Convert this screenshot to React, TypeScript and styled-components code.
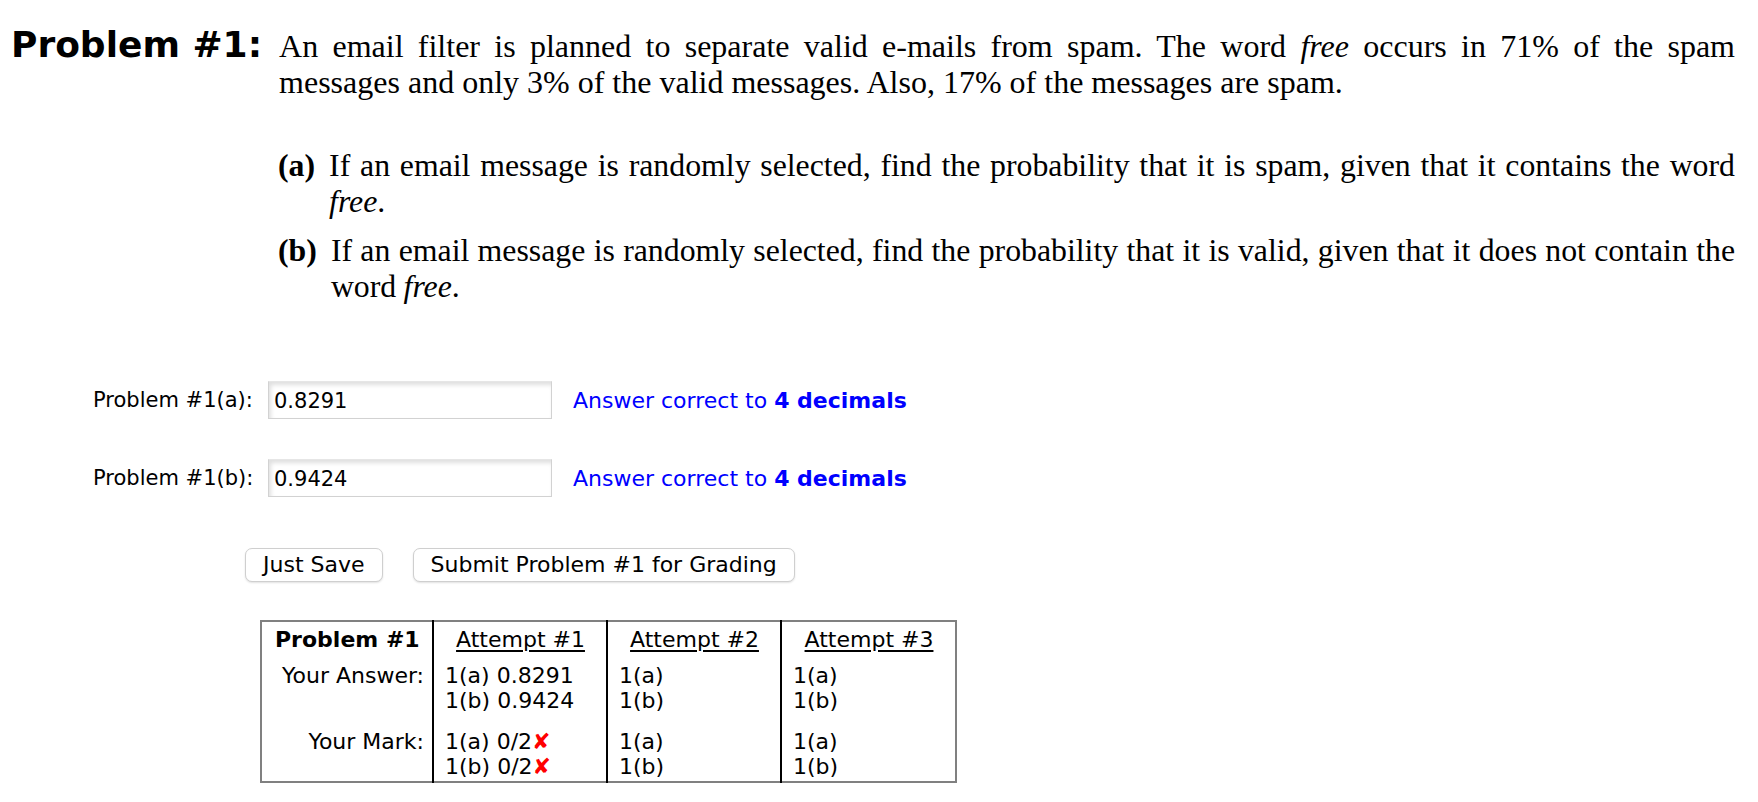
import * as React from 'react';
import styled, { createGlobalStyle } from 'styled-components';

const GlobalStyle = createGlobalStyle`
  html, body {
    margin: 0;
    padding: 0;
    background: #ffffff;
    color: #000000;
  }
`;

const Page = styled.div`
  padding: 28px 23px 20px 11px;
`;

const ProblemHead = styled.div`
  display: flex;
  align-items: baseline;
`;

const ProblemTitle = styled.h1`
  flex: none;
  margin: 0 17px 0 0;
  font-family: "DejaVu Sans", Verdana, sans-serif;
  font-weight: bold;
  font-size: 36px;
  line-height: 32px;
  white-space: nowrap;
`;

const Statement = styled.p`
  flex: 1;
  margin: 0;
  font-family: "Liberation Serif", "Times New Roman", serif;
  font-size: 32px;
  line-height: 36px;
  text-align: justify;
`;

const Parts = styled.div`
  margin: 48px 0 0 267px;
  display: flex;
  flex-direction: column;
  gap: 13px;
`;

const Part = styled.div`
  display: flex;
  font-family: "Liberation Serif", "Times New Roman", serif;
  font-size: 31.8px;
  line-height: 36px;
`;

const PartLabel = styled.b`
  flex: none;
  margin-right: 14px;
`;

const PartText = styled.div`
  flex: 1;
  text-align: justify;
  word-spacing: -0.6px;
`;

const Answers = styled.div`
  margin-top: 76px;
  display: flex;
  flex-direction: column;
  gap: 40px;
  font-family: "DejaVu Sans", Verdana, sans-serif;
  font-size: 21px;
`;

const AnswerRow = styled.div`
  display: flex;
  align-items: center;
  padding-left: 82px;
`;

const AnswerLabel = styled.label`
  width: 175px;
  flex: none;
`;

const AnswerInput = styled.input`
  box-sizing: border-box;
  width: 284px;
  height: 38px;
  padding: 2px 5px 0;
  border: 1px solid #d2d2d2;
  border-top-color: #e6e6e6;
  box-shadow: inset 2px 3px 4px rgba(0, 0, 0, 0.13);
  font-family: "DejaVu Sans", Verdana, sans-serif;
  font-size: 21px;
  color: #000;
  background: #fff;
  outline: none;
`;

const Feedback = styled.span`
  margin-left: 21px;
  color: #0000ff;
  font-size: 22px;

  b {
    font-weight: bold;
  }
`;

const Buttons = styled.div`
  margin: 51px 0 0 234px;
  display: flex;
  gap: 30px;
`;

const Button = styled.button`
  height: 34px;
  padding: 0 17px;
  border: 1px solid #cfcfcf;
  border-radius: 7px;
  background: #ffffff;
  box-shadow: 0 1px 2px rgba(0, 0, 0, 0.12);
  font-family: "DejaVu Sans", Verdana, sans-serif;
  font-size: 22px;
  color: #000;
  line-height: 1;
`;

const Attempts = styled.table`
  margin: 38px 0 0 249px;
  border-collapse: collapse;
  border: 2px solid #808080;
  font-family: "DejaVu Sans", Verdana, sans-serif;
  font-size: 22px;
  line-height: 25px;

  td, th {
    padding: 5px 10px 6px 11px;
    vertical-align: top;
    text-align: left;
    border-left: 2px solid #000;
  }

  td:first-child, th:first-child {
    border-left: none;
  }

  tr:last-child td {
    padding-top: 10px;
    padding-bottom: 2px;
  }
`;

const Corner = styled.th`
  width: 147px;
  font-weight: bold;
  && {
    text-align: left;
    padding-left: 13px;
  }
`;

const AttemptHead = styled.th<{ $width: number }>`
  width: ${(p) => p.$width}px;
  font-weight: normal;
  text-decoration: underline;
  text-underline-offset: 3px;
  && {
    text-align: center;
  }
`;

const RowLabel = styled.td`
  && {
    text-align: right;
    padding-right: 8px;
  }
`;

const Cross = styled.span`
  color: #ff0000;
  font-weight: bold;
`;

const attempts = [
  { name: 'Attempt #1', width: 151, answers: ['0.8291', '0.9424'], marks: ['0/2', '0/2'] },
  { name: 'Attempt #2', width: 151, answers: ['', ''], marks: ['', ''] },
  { name: 'Attempt #3', width: 152, answers: ['', ''], marks: ['', ''] },
];

const parts = ['a', 'b'];

export default function App() {
  return (
    <Page>
      <GlobalStyle />
      <ProblemHead>
        <ProblemTitle>Problem #1:</ProblemTitle>
        <Statement>
          An email filter is planned to separate valid e-mails from spam. The word <i>free</i> occurs
          in 71% of the spam messages and only 3% of the valid messages. Also, 17% of the messages
          are spam.
        </Statement>
      </ProblemHead>

      <Parts>
        <Part>
          <PartLabel>(a)</PartLabel>
          <PartText>
            If an email message is randomly selected, find the probability that it is spam, given
            that it contains the word <i>free</i>.
          </PartText>
        </Part>
        <Part>
          <PartLabel>(b)</PartLabel>
          <PartText>
            If an email message is randomly selected, find the probability that it is valid, given
            that it does not contain the word <i>free</i>.
          </PartText>
        </Part>
      </Parts>

      <Answers>
        <AnswerRow>
          <AnswerLabel>Problem #1(a):</AnswerLabel>
          <AnswerInput defaultValue="0.8291" />
          <Feedback>
            Answer correct to <b>4 decimals</b>
          </Feedback>
        </AnswerRow>
        <AnswerRow>
          <AnswerLabel>Problem #1(b):</AnswerLabel>
          <AnswerInput defaultValue="0.9424" />
          <Feedback>
            Answer correct to <b>4 decimals</b>
          </Feedback>
        </AnswerRow>
      </Answers>

      <Buttons>
        <Button>Just Save</Button>
        <Button>Submit Problem #1 for Grading</Button>
      </Buttons>

      <Attempts>
        <thead>
          <tr>
            <Corner>Problem #1</Corner>
            {attempts.map((a) => (
              <AttemptHead key={a.name} $width={a.width}>
                {a.name}
              </AttemptHead>
            ))}
          </tr>
        </thead>
        <tbody>
          <tr>
            <RowLabel>Your Answer:</RowLabel>
            {attempts.map((a) => (
              <td key={a.name}>
                {parts.map((p, i) => (
                  <div key={p}>
                    1({p}){a.answers[i] ? ` ${a.answers[i]}` : ''}
                  </div>
                ))}
              </td>
            ))}
          </tr>
          <tr>
            <RowLabel>Your Mark:</RowLabel>
            {attempts.map((a) => (
              <td key={a.name}>
                {parts.map((p, i) => (
                  <div key={p}>
                    1({p})
                    {a.marks[i] && (
                      <>
                        {` ${a.marks[i]}`}
                        <Cross>✘</Cross>
                      </>
                    )}
                  </div>
                ))}
              </td>
            ))}
          </tr>
        </tbody>
      </Attempts>
    </Page>
  );
}
